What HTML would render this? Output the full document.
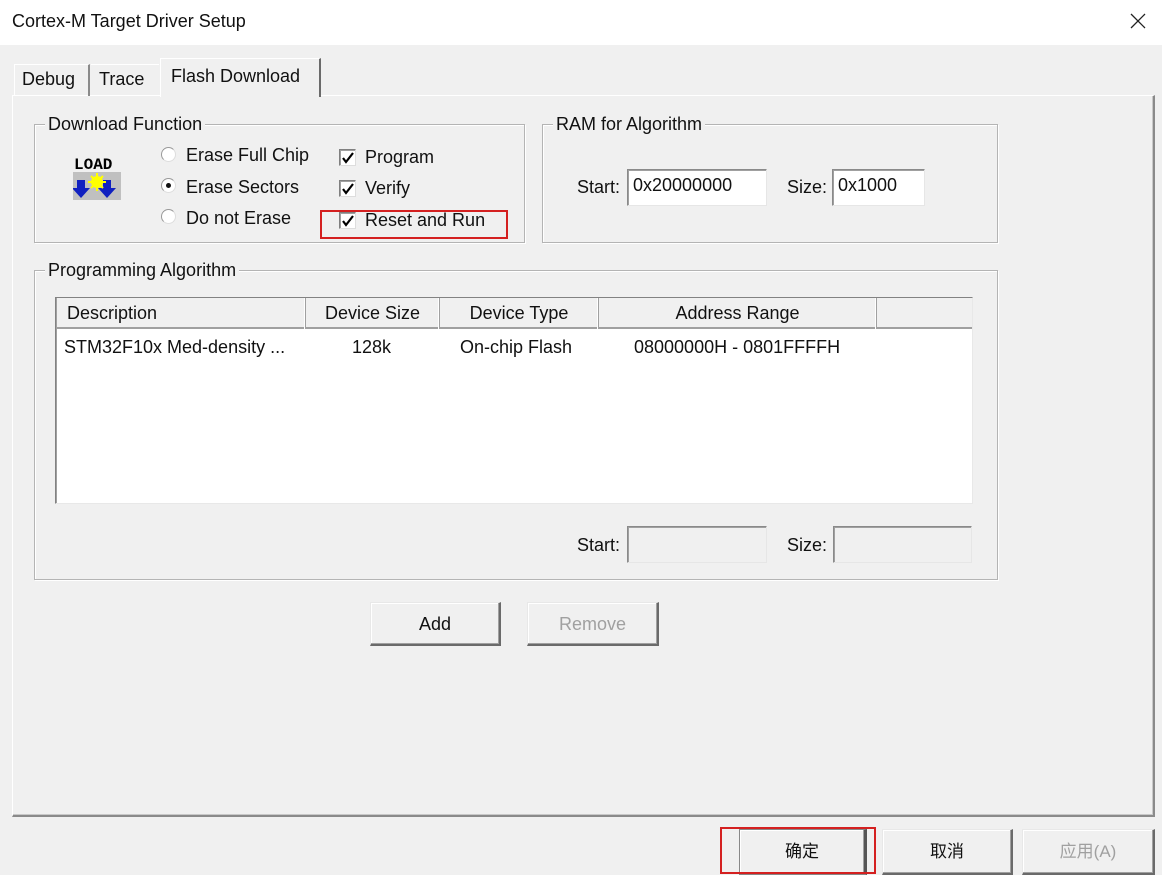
<!DOCTYPE html>
<html><head><meta charset="utf-8"><style>
*{box-sizing:border-box}
body{margin:0;width:1162px;height:875px;background:#f0f0f0;position:relative;overflow:hidden;font-family:"Liberation Sans","Noto Sans CJK SC",sans-serif;font-size:18px;color:#111}
.a{position:absolute}
.t{position:absolute;white-space:nowrap;line-height:20px}
.grp{position:absolute;border:1px solid #b4b4b4;box-shadow:inset 1px 1px 0 #fff,1px 1px 0 #fff}
.lg{position:absolute;top:-11px;left:10px;background:#f0f0f0;padding:0 3px;white-space:nowrap;line-height:20px}
.inp{position:absolute;border:1px solid #8a8a8a;border-right-color:#e6e6e6;border-bottom-color:#e6e6e6;box-shadow:inset 1px 1px 0 #a0a0a0;background:#fff;padding:4px 0 0 5px;line-height:22px}
.btn{position:absolute;background:#f0f0f0;border:1px solid #e8e8e8;border-right:2px solid #6a6a6a;border-bottom:2px solid #6a6a6a;box-shadow:inset -1px -1px 0 #a0a0a0,inset 1px 1px 0 #fff;text-align:center}
.cb{position:absolute;width:17px;height:17px;background:#fff;border:1px solid #808080;border-right-color:#ddd;border-bottom-color:#ddd;box-shadow:inset 1px 1px 0 #a0a0a0}
.rd{position:absolute;width:15px;height:15px;border-radius:50%;background:#fff;border:1px solid #999;border-right-color:#ddd;border-bottom-color:#ddd}
.hd{position:absolute;top:0;height:31px;border-right:1px solid #a0a0a0;box-shadow:inset -1px 0 0 #fff;line-height:31px;padding-left:10px;white-space:nowrap}
</style></head><body>
<div class="a" style="left:0;top:0;width:1162px;height:45px;background:#fff"></div>
<div class="t" style="left:12px;top:11px">Cortex-M Target Driver Setup</div>
<svg class="a" style="left:1130px;top:13px" width="16" height="16"><path d="M1 1L15 15M15 1L1 15" stroke="#222" stroke-width="1.3"/></svg>

<div class="a" style="left:12px;top:95px;width:1143px;height:722px;border:1px solid #fff;border-right:2px solid #8a8a8a;border-bottom:2px solid #8a8a8a;box-shadow:inset -1px -1px 0 #c8c8c8"></div>
<div class="a" style="left:14px;top:64px;width:76px;height:32px;border-left:1px solid #fff;border-top:1px solid #fff;border-right:2px solid #8a8a8a"></div>
<div class="t" style="left:22px;top:69px">Debug</div>
<div class="a" style="left:91px;top:64px;width:68px;height:32px;border-top:1px solid #fff"></div>
<div class="t" style="left:99px;top:69px">Trace</div>
<div class="a" style="left:160px;top:58px;width:161px;height:39px;background:#f0f0f0;border-left:1px solid #fff;border-top:1px solid #fff;border-right:2px solid #6a6a6a"></div>
<div class="t" style="left:171px;top:66px">Flash Download</div>

<div class="grp" style="left:34px;top:124px;width:491px;height:119px"><div class="lg">Download Function</div></div>
<svg class="a" style="left:73px;top:152px" width="48" height="48">
<rect x="0" y="0" width="48" height="48" fill="#c0c0c0"/>
<rect x="0" y="0" width="48" height="20" fill="#f0f0f0"/>
<text x="1" y="17" font-family="Liberation Mono" font-weight="bold" font-size="16" fill="#000">LOAD</text>
<path d="M4 28h8v8h5l-9 10l-9-10h5z" fill="#1020c0"/>
<path d="M30 28h8v8h5l-9 10l-9-10h5z" fill="#1020c0"/>
<circle cx="24" cy="30" r="6" fill="#ffff00"/><path d="M24 21v18M15 30h18M18 24l12 12M30 24l-12 12" stroke="#ffff00" stroke-width="2"/>
</svg>
<div class="rd" style="left:161px;top:147px"></div>
<div class="t" style="left:186px;top:145px">Erase Full Chip</div>
<div class="rd" style="left:161px;top:178px"><div class="a" style="left:4px;top:4px;width:5px;height:5px;border-radius:50%;background:#111"></div></div>
<div class="t" style="left:186px;top:177px">Erase Sectors</div>
<div class="rd" style="left:161px;top:209px"></div>
<div class="t" style="left:186px;top:208px">Do not Erase</div>
<div class="cb" style="left:339px;top:149px"></div>
<div class="t" style="left:365px;top:147px">Program</div>
<div class="cb" style="left:339px;top:180px"></div>
<div class="t" style="left:365px;top:178px">Verify</div>
<div class="cb" style="left:339px;top:212px"></div>
<div class="t" style="left:365px;top:210px">Reset and Run</div>
<svg class="a" style="left:341px;top:151px" width="14" height="80"><path d="M2 7l3 4l7-9M2 38l3 4l7-9M2 70l3 4l7-9" stroke="#000" stroke-width="2.2" fill="none"/></svg>
<div class="a" style="left:320px;top:210px;width:188px;height:29px;border:2px solid #d42020"></div>

<div class="grp" style="left:542px;top:124px;width:456px;height:119px"><div class="lg">RAM for Algorithm</div></div>
<div class="t" style="left:577px;top:177px">Start:</div>
<div class="inp" style="left:627px;top:169px;width:140px;height:37px">0x20000000</div>
<div class="t" style="left:787px;top:177px">Size:</div>
<div class="inp" style="left:832px;top:169px;width:93px;height:37px">0x1000</div>

<div class="grp" style="left:34px;top:270px;width:964px;height:310px"><div class="lg">Programming Algorithm</div></div>
<div class="a" style="left:55px;top:297px;width:918px;height:207px;background:#fff;border:1px solid #828282;border-right-color:#e8e8e8;border-bottom-color:#e8e8e8;box-shadow:inset 1px 1px 0 #a0a0a0">
 <div class="a" style="left:1px;top:0;width:915px;height:31px;background:#f0f0f0;border-bottom:2px solid #a0a0a0"></div>
 <div class="hd" style="left:1px;width:249px">Description</div>
 <div class="hd" style="left:250px;width:134px;text-align:center;padding:0">Device Size</div>
 <div class="hd" style="left:384px;width:159px;text-align:center;padding:0">Device Type</div>
 <div class="hd" style="left:543px;width:278px;text-align:center;padding:0">Address Range</div>
 <div class="t" style="left:8px;top:39px">STM32F10x Med-density ...</div>
 <div class="t" style="left:296px;top:39px">128k</div>
 <div class="t" style="left:404px;top:39px">On-chip Flash</div>
 <div class="t" style="left:578px;top:39px">08000000H - 0801FFFFH</div>
</div>
<div class="t" style="left:577px;top:535px">Start:</div>
<div class="inp" style="left:627px;top:526px;width:140px;height:37px;background:#f0f0f0"></div>
<div class="t" style="left:787px;top:535px">Size:</div>
<div class="inp" style="left:833px;top:526px;width:139px;height:37px;background:#f0f0f0"></div>

<div class="btn" style="left:370px;top:602px;width:131px;height:44px;line-height:42px">Add</div>
<div class="btn" style="left:527px;top:602px;width:132px;height:44px;line-height:42px;color:#a0a0a0">Remove</div>

<div class="btn" style="left:739px;top:829px;width:128px;height:46px;line-height:44px;border-color:#888;border-right:3px solid #555;font-size:17px">确定</div>
<div class="a" style="left:720px;top:827px;width:156px;height:47px;border:2px solid #d42020"></div>
<div class="btn" style="left:882px;top:829px;width:131px;height:46px;line-height:44px;font-size:17px">取消</div>
<div class="btn" style="left:1022px;top:829px;width:133px;height:46px;line-height:44px;color:#a0a0a0;font-size:17px">应用(A)</div>
</body></html>
